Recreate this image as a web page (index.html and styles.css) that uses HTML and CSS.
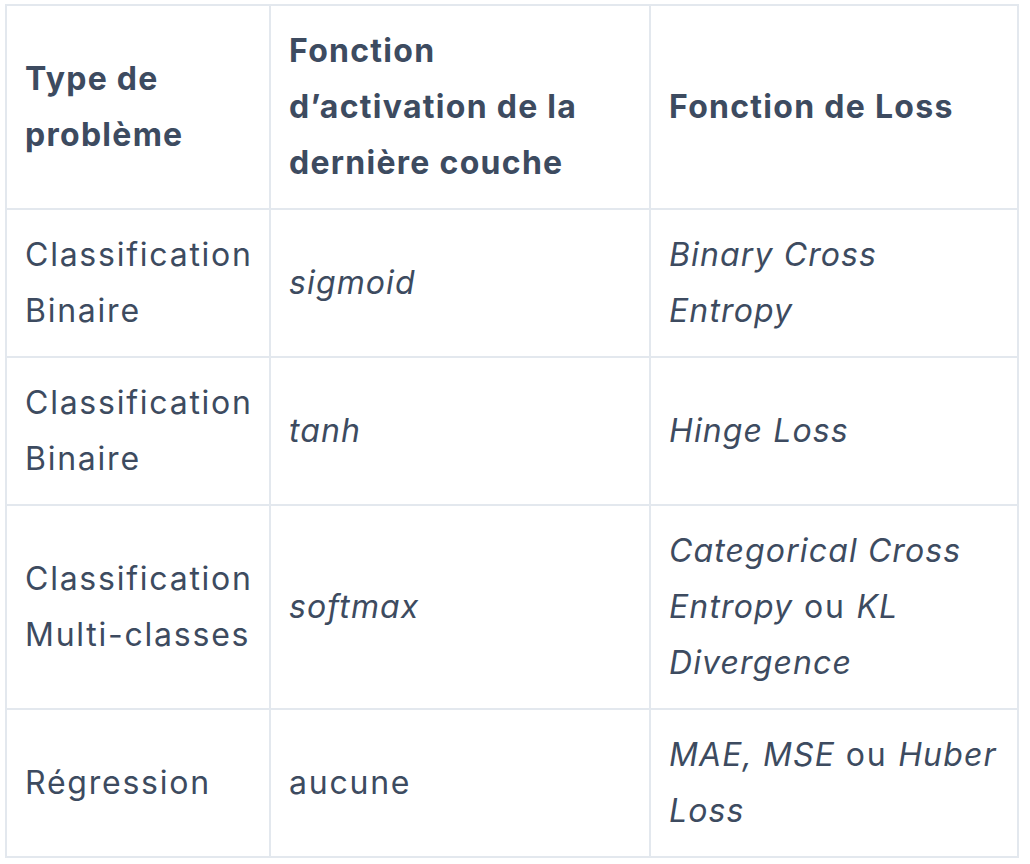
FILE: index.html
```html
<!DOCTYPE html>
<html lang="fr">
<head>
<meta charset="utf-8">
<title>Fonctions d'activation et de Loss</title>
<link rel="stylesheet" href="styles.css">
</head>
<body>
<div class="wrap">
<table class="loss-table">
<colgroup>
<col class="c1">
<col class="c2">
<col class="c3">
</colgroup>
<thead>
<tr>
<th>Type de problème</th>
<th>Fonction d’activation de la dernière couche</th>
<th>Fonction de Loss</th>
</tr>
</thead>
<tbody>
<tr>
<td>Classification Binaire</td>
<td><em>sigmoid</em></td>
<td><em>Binary Cross Entropy</em></td>
</tr>
<tr>
<td>Classification Binaire</td>
<td><em>tanh</em></td>
<td><em>Hinge Loss</em></td>
</tr>
<tr>
<td>Classification Multi-classes</td>
<td><em>softmax</em></td>
<td><em>Categorical Cross Entropy</em> ou <em>KL Divergence</em></td>
</tr>
<tr>
<td>Régression</td>
<td>aucune</td>
<td><em>MAE, MSE</em> ou <em>Huber Loss</em></td>
</tr>
</tbody>
</table>
</div>
</body>
</html>
```
FILE: styles.css
```css
html, body {
  margin: 0;
  padding: 0;
  background: #ffffff;
}
.wrap {
  padding: 4px 5px;
}
.loss-table {
  width: 1012px;
  table-layout: fixed;
  border-collapse: collapse;
  font-family: Inter, "Open Sans", sans-serif;
  font-size: 32px;
  line-height: 56px;
  color: #3d4b60;
}
.c1 { width: 264px; }
.c2 { width: 380px; }
.c3 { width: 368px; }
.loss-table th,
.loss-table td {
  border: 2px solid #e3e8ee;
  padding: 17px 18px;
  text-align: left;
  vertical-align: middle;
}
.loss-table th {
  font-weight: 700;
  letter-spacing: 0.04em;
}
.loss-table td {
  letter-spacing: 0.055em;
}
.loss-table em {
  font-style: italic;
  letter-spacing: 0.035em;
}
```
